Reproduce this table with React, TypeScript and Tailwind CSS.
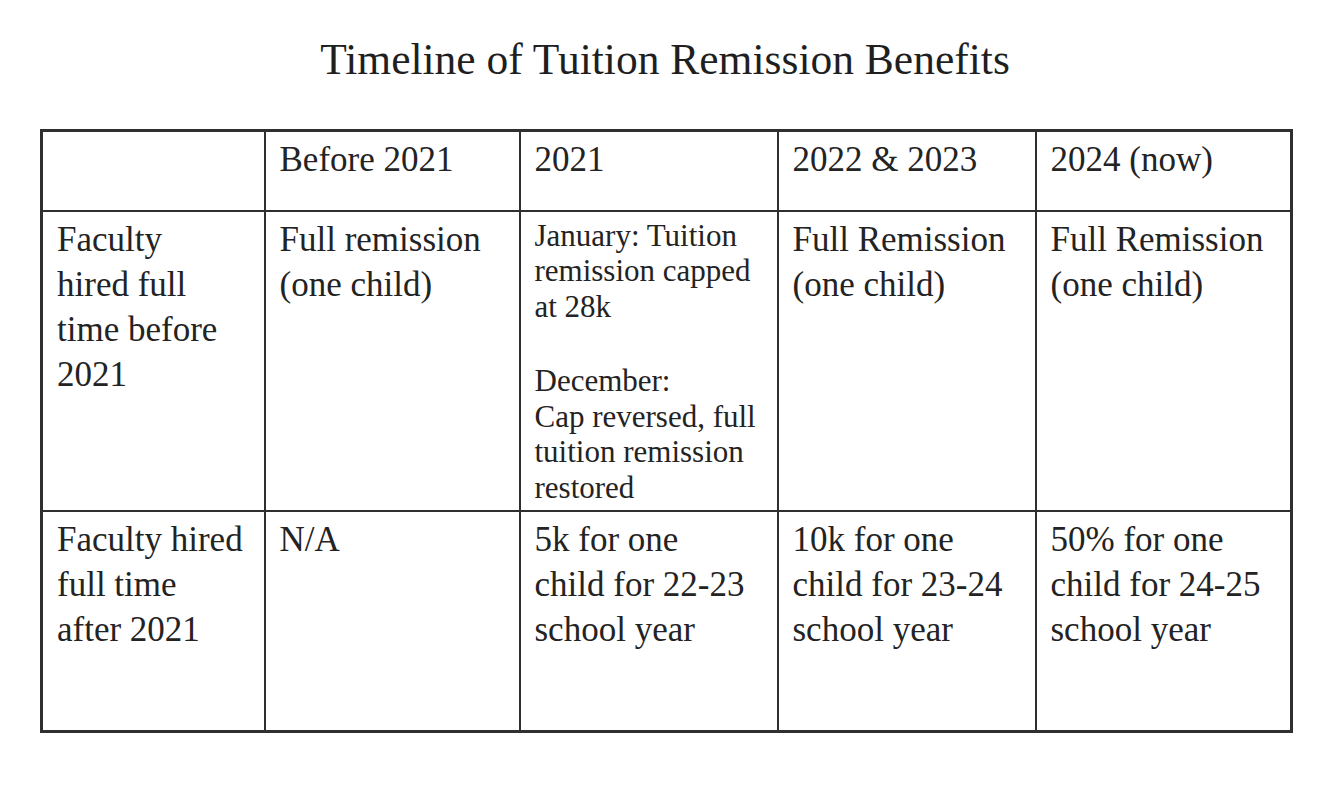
import React from "react";

const cell = "border-2 border-[#2f2f2f] align-top pl-[14px] pr-[10px] pt-[5px] text-[35px] leading-[45px] whitespace-nowrap";

export default function App() {
  return (
    <div className="w-[1336px] h-[786px] bg-white text-[#232323] font-['Liberation_Serif','Times_New_Roman',serif]">
      <div className="ml-[40px] w-[1250px] pt-[33px]">
        <h1 className="text-center text-[43.5px] leading-[52px] text-[#1f1f1f]">Timeline of Tuition Remission Benefits</h1>
        <table className="mt-[44px] w-[1250px] table-fixed border-collapse border-[3px] border-[#2f2f2f]">
          <colgroup>
            <col className="w-[223px]" />
            <col className="w-[255px]" />
            <col className="w-[258px]" />
            <col className="w-[258px]" />
            <col className="w-[256px]" />
          </colgroup>
          <tbody>
            <tr className="h-[80px]">
              <td className={cell}></td>
              <td className={cell}>Before 2021</td>
              <td className={cell}>2021</td>
              <td className={cell}>2022 &amp; 2023</td>
              <td className={cell}>2024 (now)</td>
            </tr>
            <tr className="h-[300px]">
              <td className={cell + " pl-[13px]"}>Faculty<br />hired full<br />time before<br />2021</td>
              <td className={cell}>Full remission<br />(one child)</td>
              <td className="border-2 border-[#2f2f2f] align-top pl-[14px] pr-[6px] pt-[6px] text-[31px] leading-[35.5px] whitespace-nowrap">
                <div>January: Tuition<br />remission capped<br />at 28k</div>
                <div className="mt-[39px]">December:<br />Cap reversed, full<br />tuition remission<br />restored</div>
              </td>
              <td className={cell}>Full Remission<br />(one child)</td>
              <td className={cell}>Full Remission<br />(one child)</td>
            </tr>
            <tr className="h-[221px]">
              <td className={cell + " pl-[13px]"}>Faculty hired<br />full time<br />after 2021</td>
              <td className={cell}>N/A</td>
              <td className={cell}>5k for one<br />child for 22-23<br />school year</td>
              <td className={cell}>10k for one<br />child for 23-24<br />school year</td>
              <td className={cell}>50% for one<br />child for 24-25<br />school year</td>
            </tr>
          </tbody>
        </table>
      </div>
    </div>
  );
}
